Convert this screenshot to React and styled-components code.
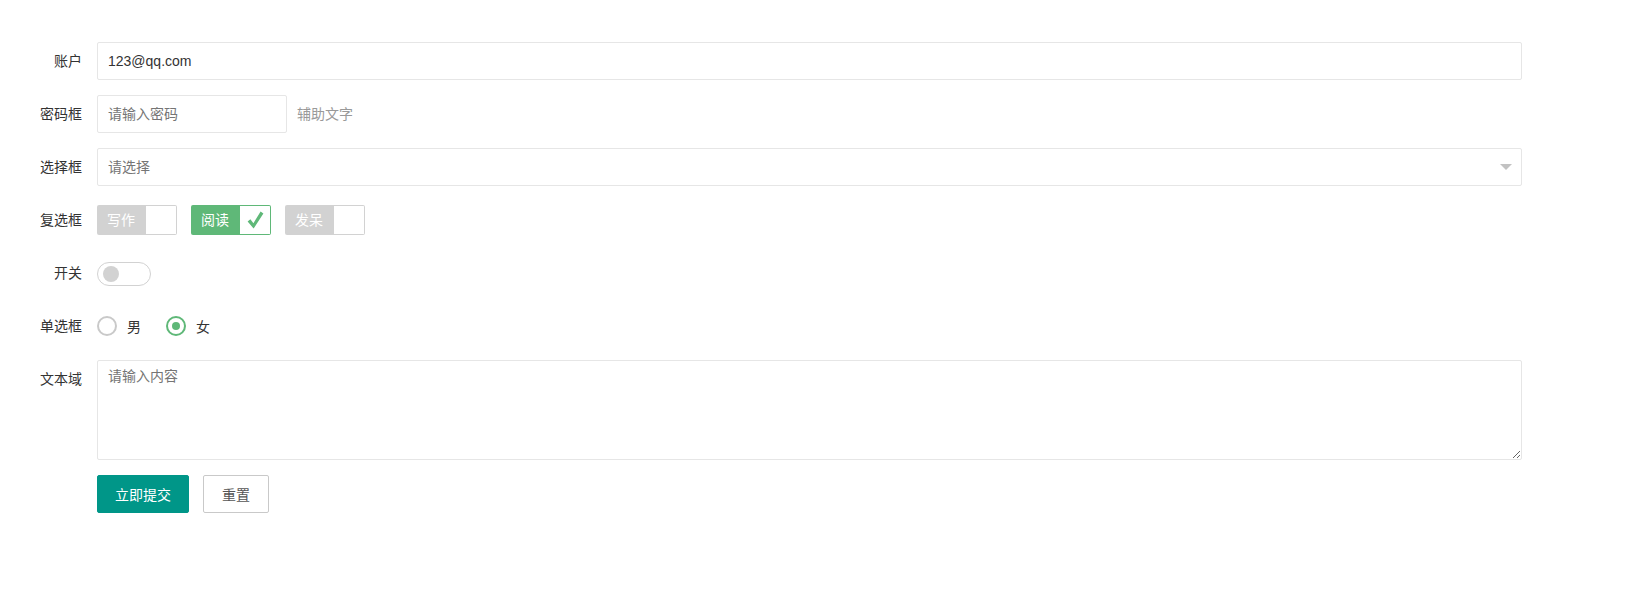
import React from "react";
import styled, { createGlobalStyle } from "styled-components";

const Global = createGlobalStyle`
  html, body { margin: 0; padding: 0; background: #fff; }
  body {
    font-family: "Liberation Sans", "Noto Sans CJK SC", sans-serif;
    font-size: 14px;
    color: #333;
  }
  * { box-sizing: border-box; }
  input::placeholder, textarea::placeholder { color: #757575; }
`;

const Form = styled.form`
  padding: 42px 104px 0 0;
  width: 1626px;
`;

const Item = styled.div`
  display: flex;
  align-items: flex-start;
  margin-bottom: 15px;
`;

const Label = styled.label`
  flex: 0 0 97px;
  width: 97px;
  padding: 9px 15px 9px 0;
  line-height: 20px;
  text-align: right;
  color: #333;
`;

const Block = styled.div`
  flex: 1;
  min-height: 36px;
  position: relative;
  display: flex;
  align-items: flex-start;
`;

const Input = styled.input`
  display: block;
  width: ${(p) => p.$width || "100%"};
  height: 38px;
  line-height: 38px;
  padding: 0 10px;
  border: 1px solid #e6e6e6;
  border-radius: 2px;
  background: #fff;
  color: #333;
  font: inherit;
  outline: none;
`;

const Aux = styled.div`
  padding: 9px 0;
  line-height: 20px;
  margin-left: 10px;
  color: #999;
`;

const SelectWrap = styled.div`
  position: relative;
  width: 100%;
`;

const Edge = styled.i`
  position: absolute;
  right: 10px;
  top: 50%;
  margin-top: -3px;
  width: 0;
  height: 0;
  border-style: solid;
  border-width: 6px 6px 0 6px;
  border-color: #c2c2c2 transparent transparent transparent;
`;

const Checks = styled.div`
  display: flex;
  gap: 14px;
  margin-top: 4px;
`;

const Check = styled.div`
  display: flex;
  height: 30px;
  cursor: pointer;
`;

const CheckText = styled.span`
  display: block;
  width: 49px;
  height: 30px;
  line-height: 30px;
  padding-left: 10px;
  background: ${(p) => (p.$on ? "#5FB878" : "#d2d2d2")};
  color: #fff;
  border-radius: 2px 0 0 2px;
  font-size: 14px;
`;

const CheckBox = styled.i`
  display: flex;
  align-items: center;
  justify-content: center;
  width: 31px;
  height: 30px;
  border: 1px solid ${(p) => (p.$on ? "#5FB878" : "#d2d2d2")};
  border-left: none;
  border-radius: 0 2px 2px 0;
  background: #fff;
`;

const Switch = styled.div`
  position: relative;
  width: 54px;
  height: 24px;
  margin-top: 8px;
  border: 1px solid #d2d2d2;
  border-radius: 20px;
  background: #fff;
`;

const Knob = styled.i`
  position: absolute;
  left: 5px;
  top: 3px;
  width: 16px;
  height: 16px;
  border-radius: 50%;
  background: #d2d2d2;
`;

const Radios = styled.div`
  display: flex;
  gap: 25px;
  margin-top: 9px;
`;

const Radio = styled.div`
  display: flex;
  align-items: center;
  height: 20px;
  gap: 10px;
  color: #333;
`;

const Circle = styled.span`
  position: relative;
  width: 20px;
  height: 20px;
  border-radius: 50%;
  border: 2px solid ${(p) => (p.$on ? "#5FB878" : "#c9c9c9")};
  &::after {
    content: "";
    display: ${(p) => (p.$on ? "block" : "none")};
    position: absolute;
    left: 50%;
    top: 50%;
    width: 8px;
    height: 8px;
    margin: -4px 0 0 -4px;
    border-radius: 50%;
    background: #5FB878;
  }
`;

const RadioText = styled.span`
  line-height: 20px;
  padding-top: 1px;
`;

const TextArea = styled.textarea`
  display: block;
  width: 100%;
  min-height: 100px;
  height: 100px;
  padding: 4px 10px 6px;
  line-height: 20px;
  border: 1px solid #e6e6e6;
  border-radius: 2px;
  font: inherit;
  color: #333;
  outline: none;
`;

const Buttons = styled.div`
  display: flex;
  gap: 14px;
  padding-left: 97px;
`;

const Button = styled.button`
  height: 38px;
  line-height: 36px;
  padding: 0 ${(p) => (p.$primary ? "18px" : "17px")};
  font: inherit;
  font-size: 14px;
  border-radius: 2px;
  cursor: pointer;
  border: ${(p) => (p.$primary ? "1px solid #C9C9C9" : "1px solid #009688")};
  background: ${(p) => (p.$primary ? "#fff" : "#009688")};
  color: ${(p) => (p.$primary ? "#555" : "#fff")};
`;

const CheckIcon = () => (
  <svg width="17" height="18" viewBox="0 0 17 18">
    <path
      d="M0.6 10.4 L3.4 8.2 L6.4 12.2 L13.6 0.4 L16.4 2.4 L6.6 17.6 Z"
      fill="#5FB878"
    />
  </svg>
);

const checks = [
  { t: "写作", on: false },
  { t: "阅读", on: true },
  { t: "发呆", on: false },
];

export default function App() {
  return (
    <>
      <Global />
      <Form onSubmit={(e) => e.preventDefault()}>
        <Item>
          <Label>账户</Label>
          <Block>
            <Input defaultValue="123@qq.com" />
          </Block>
        </Item>
        <Item>
          <Label>密码框</Label>
          <Block>
            <Input type="password" $width="190px" placeholder="请输入密码" />
            <Aux>辅助文字</Aux>
          </Block>
        </Item>
        <Item>
          <Label>选择框</Label>
          <Block>
            <SelectWrap>
              <Input readOnly placeholder="请选择" />
              <Edge />
            </SelectWrap>
          </Block>
        </Item>
        <Item>
          <Label>复选框</Label>
          <Block>
            <Checks>
              {checks.map((c) => (
                <Check key={c.t}>
                  <CheckText $on={c.on}>{c.t}</CheckText>
                  <CheckBox $on={c.on}>{c.on && <CheckIcon />}</CheckBox>
                </Check>
              ))}
            </Checks>
          </Block>
        </Item>
        <Item>
          <Label>开关</Label>
          <Block>
            <Switch>
              <Knob />
            </Switch>
          </Block>
        </Item>
        <Item>
          <Label>单选框</Label>
          <Block>
            <Radios>
              <Radio>
                <Circle />
                <RadioText>男</RadioText>
              </Radio>
              <Radio>
                <Circle $on />
                <RadioText>女</RadioText>
              </Radio>
            </Radios>
          </Block>
        </Item>
        <Item>
          <Label>文本域</Label>
          <Block>
            <TextArea placeholder="请输入内容" />
          </Block>
        </Item>
        <Buttons>
          <Button type="submit">立即提交</Button>
          <Button type="reset" $primary>
            重置
          </Button>
        </Buttons>
      </Form>
    </>
  );
}
